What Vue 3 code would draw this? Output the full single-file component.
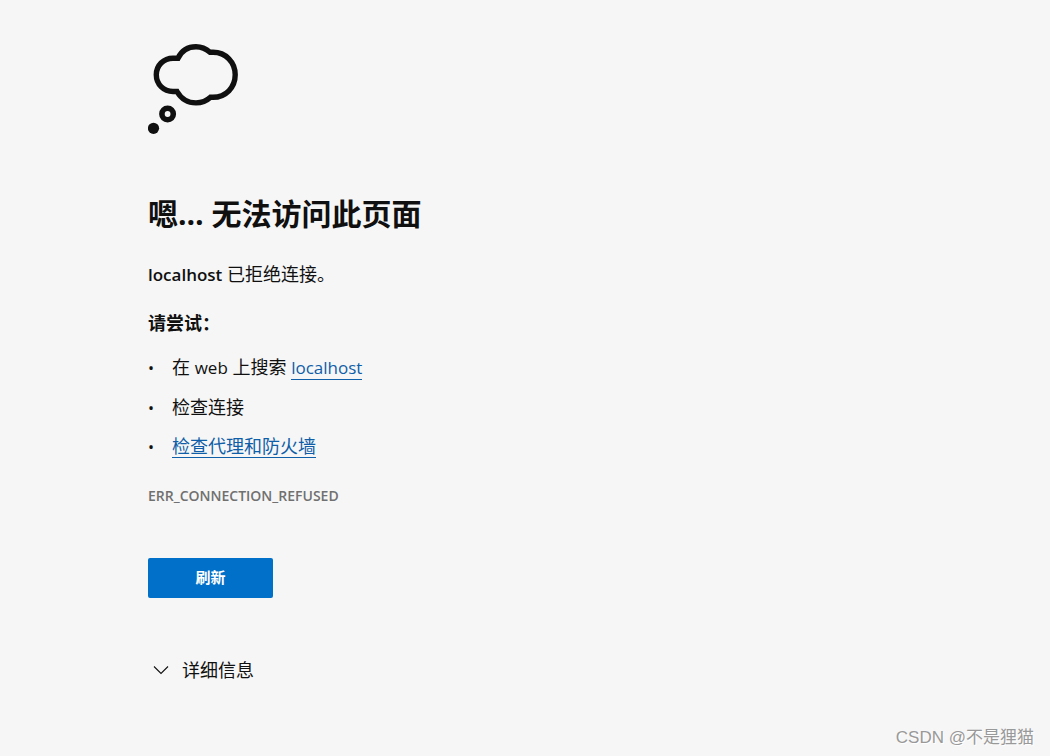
<script setup>
import { ref } from 'vue'

const expanded = ref(false)
const reload = () => window.location.reload()
</script>

<template>
  <div class="page" lang="zh-CN">
    <main class="content">
      <svg class="cloud" viewBox="0 0 90 90" fill="none" aria-hidden="true">
        <path
          d="M30 14.2H25C15.500 14.200 8.300 21.500 8.300 30.800S15.500 47.500 25 47.500H29C33 54.500 39 58.900 48 58.900C53.500 58.900 58.500 57 62.500 53.300H65C77.800 53.300 87.200 43.400 87.200 30.800S77.800 8.300 65 8.300H62C58 4.800 53.500 2.800 48 2.800C39.500 2.800 33.500 7 30 14.200Z"
          stroke="#101010"
          stroke-width="5.400"
        />
        <circle cx="19.600" cy="70" r="5.700" stroke="#101010" stroke-width="5.600" />
        <circle cx="5.500" cy="84.300" r="5.600" fill="#101010" />
      </svg>
      <h1>嗯… 无法访问此页面</h1>
      <p class="summary"><strong>localhost</strong> 已拒绝连接。</p>
      <h2>请尝试：</h2>
      <ul class="suggestions">
        <li>在 <span class="latin">web</span> 上搜索 <a class="latin" href="#search">localhost</a></li>
        <li>检查连接</li>
        <li><a href="#proxy">检查代理和防火墙</a></li>
      </ul>
      <p class="code">ERR_CONNECTION_REFUSED</p>
      <button class="refresh" type="button" @click="reload">刷新</button>
      <button class="details" type="button" :aria-expanded="expanded" @click="expanded = !expanded">
        <svg class="chevron" viewBox="0 0 16 10" fill="none" aria-hidden="true">
          <path d="M1 1.500L8 8.500L15 1.500" stroke="#101010" stroke-width="1.100" />
        </svg>
        <span>详细信息</span>
      </button>
    </main>
    <footer class="credit">CSDN @不是狸猫</footer>
  </div>
</template>

<style>
body {
  margin: 0;
  background: #f6f6f6;
}
</style>

<style scoped>
.page {
  box-sizing: border-box;
  min-height: 100vh;
  display: flex;
  flex-direction: column;
  justify-content: space-between;
  padding: 44px 16px 4px 148px;
  color: #101010;
  font-family: "Open Sans", "Noto Sans CJK SC", sans-serif;
  font-size: 18px;
  line-height: 24px;
}
.content {
  display: flex;
  flex-direction: column;
  align-items: flex-start;
}
.cloud {
  width: 90px;
  height: 90px;
}
h1 {
  margin: 60px 0 0;
  font-size: 30px;
  line-height: 40px;
  font-weight: 700;
}
.summary {
  margin: 28px 0 0;
}
.summary strong,
.latin {
  font-size: 17px;
}
.summary strong {
  font-weight: 600;
}
h2 {
  margin: 24px 0 0;
  font-size: 18px;
  line-height: 24px;
  font-weight: 700;
}
.suggestions {
  display: grid;
  grid-auto-rows: 24px;
  gap: 16px;
  margin: 20px 0 0;
  padding: 0;
  list-style: none;
}
.suggestions li {
  display: flex;
  align-items: baseline;
  white-space: pre;
}
.suggestions li::before {
  content: "•";
  width: 24px;
  font-size: 16px;
}
a {
  color: #0f5ea8;
  text-decoration: none;
  border-bottom: 1px solid #0f5ea8;
  line-height: 22px;
}
.code {
  margin: 27px 0 0;
  color: #707070;
  font-size: 14px;
  line-height: 20px;
  font-weight: 600;
}
.refresh {
  width: 125px;
  height: 40px;
  margin: 52px 0 0;
  padding: 0 0 2px;
  border: 0;
  border-radius: 2px;
  background: #0070c9;
  color: #fff;
  font: 700 15px/20px "Open Sans", "Noto Sans CJK SC", sans-serif;
  cursor: pointer;
}
.details {
  display: flex;
  align-items: center;
  gap: 13px;
  margin: 60px 0 0;
  padding: 0 5px;
  border: 0;
  background: none;
  color: inherit;
  font: inherit;
  cursor: pointer;
}
.chevron {
  width: 16px;
  height: 10px;
}
.credit {
  align-self: flex-end;
  color: #999;
  font-family: "Liberation Sans", "Noto Sans CJK SC", sans-serif;
  font-size: 17px;
  line-height: 28px;
  text-shadow: 1px 1px 0 #fff;
}
</style>
